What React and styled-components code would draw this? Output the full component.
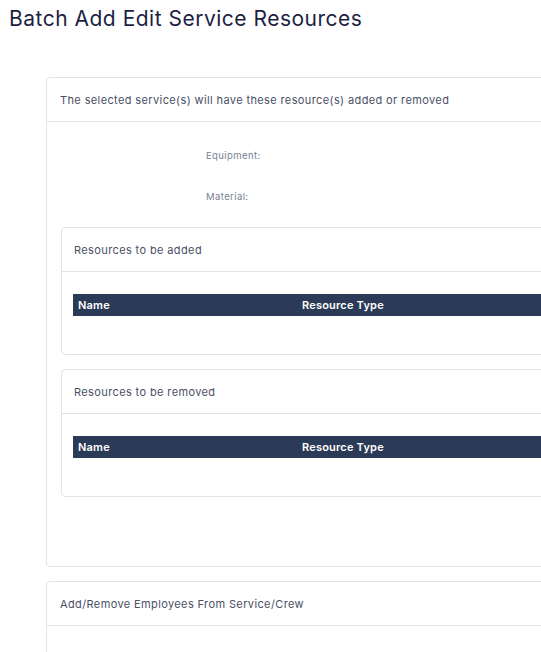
import styled, { createGlobalStyle } from "styled-components";

const GlobalStyle = createGlobalStyle`
  html, body {
    margin: 0;
    padding: 0;
    background: #ffffff;
    overflow: hidden;
  }
  body {
    font-family: Inter, "Noto Sans", sans-serif;
    color: #2e3350;
  }
`;

const Page = styled.div`
  width: 640px;
  padding: 5px 0 0 9px;
`;

const Title = styled.h1`
  margin: 0;
  font-size: 21px;
  font-weight: 400;
  line-height: 27px;
  color: #1d1f42;
  letter-spacing: 0.5px;
`;

const Content = styled.div`
  margin: 45px 0 0 37px;
  display: flex;
  flex-direction: column;
  gap: 14px;
`;

const Panel = styled.section`
  border: 1px solid #dfe4ec;
  border-radius: 4px;
  background: #fff;
`;

const PanelHeader = styled.div`
  height: ${(p) => p.$h || 43}px;
  display: flex;
  align-items: center;
  padding-left: ${(p) => p.$pad || 13}px;
  border-bottom: 1px solid #dfe4ec;
  font-size: 11px;
  letter-spacing: 0.38px;
  color: #4a4f66;
`;

const PanelBody = styled.div`
  padding: ${(p) => p.$padding || "0"};
  min-height: ${(p) => p.$minH || 0}px;
`;

const FieldList = styled.div`
  display: flex;
  flex-direction: column;
  padding: 27px 0 0 159px;
  gap: 28px;
`;

const FieldLabel = styled.div`
  font-size: 9.5px;
  line-height: 13px;
  letter-spacing: 0.4px;
  color: #7a8094;
`;

const CardStack = styled.div`
  display: flex;
  flex-direction: column;
  gap: 14px;
  margin-top: 24px;
  padding-left: 14px;
`;

const Table = styled.div`
  display: grid;
  grid-template-columns: 224px 1fr;
  height: 22px;
  background: #2b3a56;
  color: #ffffff;
  font-size: 11px;
  font-weight: 600;
  letter-spacing: 0.2px;
  align-items: center;
`;

const HeadCell = styled.div`
  padding-left: 5px;
`;

const ResourceCard = ({ title }) => (
  <Panel>
    <PanelHeader $pad={12}>{title}</PanelHeader>
    <PanelBody $padding="22px 0 38px 11px">
      <Table>
        <HeadCell>Name</HeadCell>
        <HeadCell>Resource Type</HeadCell>
      </Table>
    </PanelBody>
  </Panel>
);

export default function App() {
  return (
    <>
      <GlobalStyle />
      <Page>
        <Title>Batch Add Edit Service Resources</Title>
        <Content>
          <Panel>
            <PanelHeader>
              The selected service(s) will have these resource(s) added or removed
            </PanelHeader>
            <PanelBody $padding="0 0 69px 0">
              <FieldList>
                <FieldLabel>Equipment:</FieldLabel>
                <FieldLabel>Material:</FieldLabel>
              </FieldList>
              <CardStack>
                <ResourceCard title="Resources to be added" />
                <ResourceCard title="Resources to be removed" />
              </CardStack>
            </PanelBody>
          </Panel>
          <Panel>
            <PanelHeader>Add/Remove Employees From Service/Crew</PanelHeader>
            <PanelBody $minH={80} />
          </Panel>
        </Content>
      </Page>
    </>
  );
}
